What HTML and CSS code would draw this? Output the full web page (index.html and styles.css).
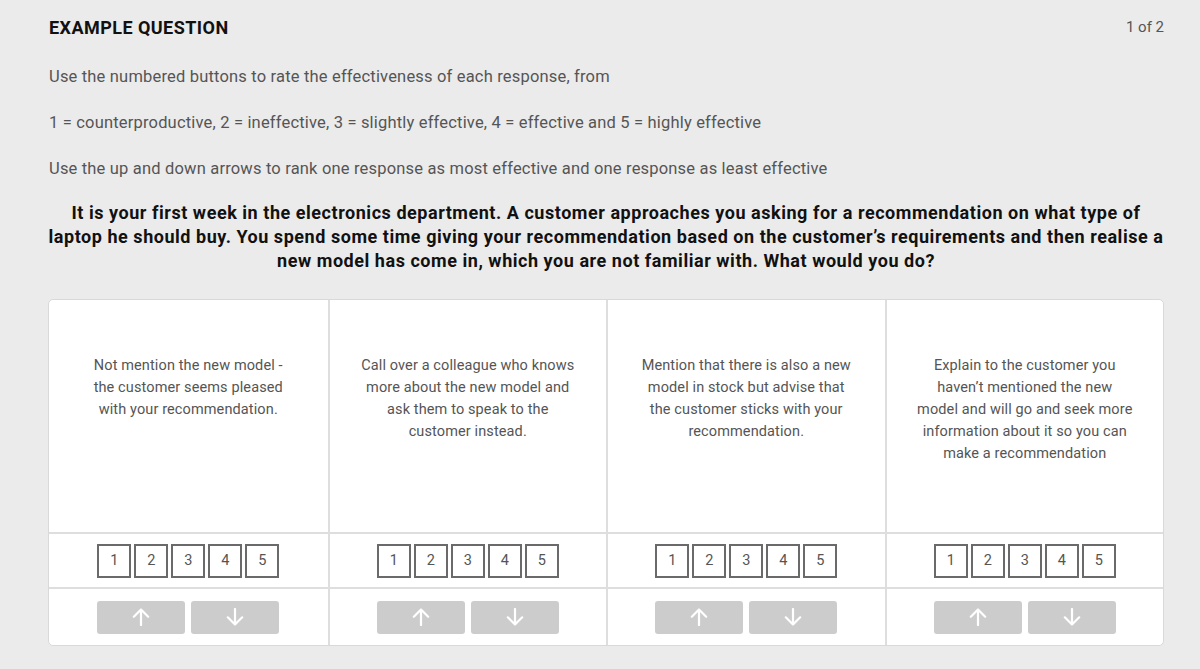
FILE: index.html
```html
<!DOCTYPE html>
<html lang="en">
<head>
<meta charset="utf-8">
<title>Example Question</title>
<link rel="stylesheet" href="styles.css">
</head>
<body>
<main class="page">
  <header class="head">
    <h1 class="title">EXAMPLE QUESTION</h1>
    <span class="count">1 of 2</span>
  </header>
  <p class="instr">Use the numbered buttons to rate the effectiveness of each response, from</p>
  <p class="instr">1 = counterproductive, 2 = ineffective, 3 = slightly effective, 4 = effective and 5 = highly effective</p>
  <p class="instr">Use the up and down arrows to rank one response as most effective and one response as least effective</p>
  <p class="question">It is your first week in the electronics department. A customer approaches you asking for a recommendation on what type of<br>laptop he should buy. You spend some time giving your recommendation based on the customer’s requirements and then realise a<br>new model has come in, which you are not familiar with. What would you do?</p>

  <section class="card">
    <div class="col">
      <div class="resp">Not mention the new model -<br>the customer seems pleased<br>with your recommendation.</div>
      <div class="rate"><button class="num">1</button><button class="num">2</button><button class="num">3</button><button class="num">4</button><button class="num">5</button></div>
      <div class="rank">
        <button class="arrow"><svg viewBox="0 0 18 18" width="18" height="18"><path d="M9 17V1.5M1.8 8.7L9 1.5l7.2 7.2"/></svg></button>
        <button class="arrow"><svg viewBox="0 0 18 18" width="18" height="18"><path d="M9 1v15.5M1.8 9.3L9 16.5l7.2-7.2"/></svg></button>
      </div>
    </div>
    <div class="col">
      <div class="resp">Call over a colleague who knows<br>more about the new model and<br>ask them to speak to the<br>customer instead.</div>
      <div class="rate"><button class="num">1</button><button class="num">2</button><button class="num">3</button><button class="num">4</button><button class="num">5</button></div>
      <div class="rank">
        <button class="arrow"><svg viewBox="0 0 18 18" width="18" height="18"><path d="M9 17V1.5M1.8 8.7L9 1.5l7.2 7.2"/></svg></button>
        <button class="arrow"><svg viewBox="0 0 18 18" width="18" height="18"><path d="M9 1v15.5M1.8 9.3L9 16.5l7.2-7.2"/></svg></button>
      </div>
    </div>
    <div class="col">
      <div class="resp">Mention that there is also a new<br>model in stock but advise that<br>the customer sticks with your<br>recommendation.</div>
      <div class="rate"><button class="num">1</button><button class="num">2</button><button class="num">3</button><button class="num">4</button><button class="num">5</button></div>
      <div class="rank">
        <button class="arrow"><svg viewBox="0 0 18 18" width="18" height="18"><path d="M9 17V1.5M1.8 8.7L9 1.5l7.2 7.2"/></svg></button>
        <button class="arrow"><svg viewBox="0 0 18 18" width="18" height="18"><path d="M9 1v15.5M1.8 9.3L9 16.5l7.2-7.2"/></svg></button>
      </div>
    </div>
    <div class="col">
      <div class="resp">Explain to the customer you<br>haven’t mentioned the new<br>model and will go and seek more<br>information about it so you can<br>make a recommendation</div>
      <div class="rate"><button class="num">1</button><button class="num">2</button><button class="num">3</button><button class="num">4</button><button class="num">5</button></div>
      <div class="rank">
        <button class="arrow"><svg viewBox="0 0 18 18" width="18" height="18"><path d="M9 17V1.5M1.8 8.7L9 1.5l7.2 7.2"/></svg></button>
        <button class="arrow"><svg viewBox="0 0 18 18" width="18" height="18"><path d="M9 1v15.5M1.8 9.3L9 16.5l7.2-7.2"/></svg></button>
      </div>
    </div>
  </section>
</main>
</body>
</html>
```

FILE: styles.css
```css
* { box-sizing: border-box; }
html, body { margin: 0; padding: 0; }
body {
  background: #ebebeb;
  font-family: Roboto, "Liberation Sans", sans-serif;
  color: #555;
}
.page {
  padding: 15px 36px 0 48px;
}
.head {
  display: flex;
  justify-content: space-between;
  align-items: center;
  height: 24px;
}
.title {
  margin: 0 0 0 1px;
  font-size: 18px;
  font-weight: 700;
  color: #111;
  letter-spacing: 0.45px;
}
.count {
  font-size: 15px;
  color: #555;
}
.instr {
  margin: 26px 0 0 1px;
  font-size: 16.5px;
  letter-spacing: 0.18px;
  line-height: 24px;
  color: #555;
}
.instr + .instr { margin-top: 22px; }
.question {
  margin: 20px 0 0;
  text-align: center;
  font-size: 18px;
  letter-spacing: 0.54px;
  line-height: 24px;
  font-weight: 700;
  color: #111;
  white-space: nowrap;
}
.card {
  margin-top: 26px;
  display: grid;
  grid-template-columns: repeat(4, 1fr);
  background: #fff;
  border: 1px solid #d9d9d9;
  border-radius: 5px;
  width: 1116px;
}
.col {
  display: flex;
  flex-direction: column;
  border-left: 2px solid #dedede;
}
.col:first-child { border-left: 0; }
.resp {
  height: 232px;
  padding: 55px 6px 0;
  text-align: center;
  font-size: 14.5px;
  letter-spacing: 0.12px;
  line-height: 22px;
  color: #555;
}
.rate {
  height: 57px;
  border-top: 2px solid #dedede;
  border-bottom: 2px solid #dedede;
  display: flex;
  justify-content: center;
  align-items: center;
  gap: 3px;
}
.num {
  width: 34px;
  height: 34px;
  padding: 0;
  border: 2px solid #6a6a6a;
  background: #fff;
  font-family: inherit;
  font-size: 14.5px;
  color: #555;
}
.rank {
  height: 56px;
  display: flex;
  justify-content: center;
  align-items: center;
  gap: 6px;
}
.arrow {
  width: 88px;
  height: 33px;
  padding: 0;
  border: 0;
  border-radius: 3px;
  background: #ccc;
  display: flex;
  align-items: center;
  justify-content: center;
}
.arrow svg {
  fill: none;
  stroke: #fff;
  stroke-width: 2.2;
  stroke-linecap: round;
  stroke-linejoin: round;
}
```
